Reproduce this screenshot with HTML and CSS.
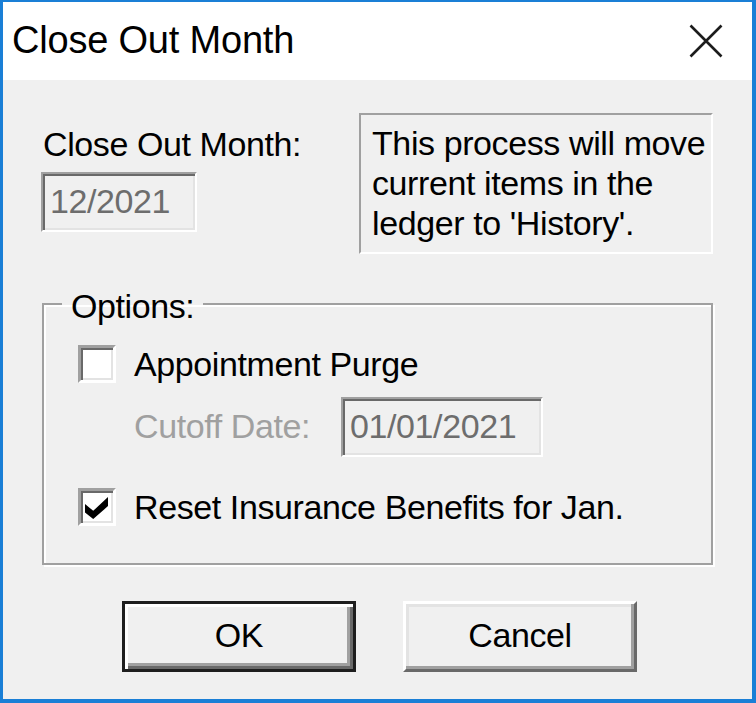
FILE: index.html
```html
<!DOCTYPE html>
<html>
<head>
<meta charset="utf-8">
<title>Close Out Month</title>
<link rel="stylesheet" href="styles.css">
</head>
<body>
<div class="window">
  <div class="titlebar">
    <span class="title">Close Out Month</span>
    <svg class="close" width="34" height="34" viewBox="0 0 34 34">
      <path d="M1.5 1.5 L32.5 32.5 M32.5 1.5 L1.5 32.5" stroke="#1c1c1c" stroke-width="2.6" fill="none"/>
    </svg>
  </div>
  <div class="content">
    <div class="top-row">
      <div class="month-col">
        <div class="label">Close Out Month:</div>
        <div class="edit edit-month">12/2021</div>
      </div>
      <div class="info">This process will move<br>current items in the<br>ledger to 'History'.</div>
    </div>
    <fieldset class="options">
      <legend class="legend">Options:</legend>
      <div class="options-body">
        <div class="check-row">
          <span class="checkbox"></span>
          <span class="label">Appointment Purge</span>
        </div>
        <div class="cutoff-row">
          <span class="label disabled">Cutoff Date:</span>
          <div class="edit edit-date">01/01/2021</div>
        </div>
        <div class="check-row check-row-last">
          <span class="checkbox">
            <svg class="tick" width="23" height="22" viewBox="0 0 7 7" preserveAspectRatio="none">
              <polygon points="0,2.2 2.5,4.4 7,0 7,2.9 2.5,7 0,4.9" fill="#000"/>
            </svg>
          </span>
          <span class="label">Reset Insurance Benefits for Jan.</span>
        </div>
      </div>
    </fieldset>
    <div class="buttons">
      <button class="btn btn-default">OK</button>
      <button class="btn">Cancel</button>
    </div>
  </div>
</div>
</body>
</html>
```
FILE: styles.css
```css
html, body {
  margin: 0;
  padding: 0;
}
body {
  width: 756px;
  height: 703px;
  overflow: hidden;
  font-family: "Liberation Sans", Arial, sans-serif;
}
.window {
  box-sizing: border-box;
  width: 756px;
  height: 703px;
  border-style: solid;
  border-color: #1a7fd6;
  border-width: 2px 4px 4px 3px;
  display: flex;
  flex-direction: column;
  background: #f0f0f0;
}
.titlebar {
  box-sizing: border-box;
  height: 78px;
  background: #ffffff;
  display: flex;
  justify-content: space-between;
  align-items: flex-start;
  padding: 16px 29px 0 9px;
}
.title {
  font-size: 38px;
  line-height: 44px;
  letter-spacing: -0.2px;
  color: #000;
}
.close {
  display: block;
  margin-top: 6px;
}
.content {
  flex: 1;
  padding: 33px 39px 0 37px;
  font-size: 34px;
  letter-spacing: -0.4px;
  color: #000;
}
.label {
  line-height: 40px;
  white-space: nowrap;
}
.top-row {
  display: flex;
  justify-content: space-between;
  align-items: flex-start;
}
.month-col {
  margin-top: 11px;
  margin-left: 3px;
  display: flex;
  flex-direction: column;
  gap: 8px;
}
.edit {
  box-sizing: border-box;
  height: 60px;
  line-height: 40px;
  padding: 7px 0 0 7px;
  color: #6d6d6d;
  background: #f0f0f0;
  border-style: solid;
  border-width: 2px;
  border-color: #a0a0a0 #ffffff #ffffff #a0a0a0;
  box-shadow: inset 2px 2px 0 #696969, inset -2px -2px 0 #e3e3e3;
  white-space: nowrap;
}
.edit-month {
  width: 156px;
  margin-left: -2px;
}
.edit-date {
  width: 202px;
  margin-left: 31px;
}
.info {
  box-sizing: border-box;
  width: 354px;
  padding: 8px 11px 9px;
  line-height: 40px;
  border-style: solid;
  border-width: 2px;
  border-color: #a0a0a0 #ffffff #ffffff #a0a0a0;
  white-space: nowrap;
}
.options {
  margin: 28px 0 0 2px;
  padding: 0;
  min-width: 0;
  border: 2px solid #a0a0a0;
  box-shadow: inset 2px 2px 0 #ffffff, 2px 2px 0 #ffffff;
}
.legend {
  margin-left: 18px;
  padding: 4px 9px 0;
  line-height: 40px;
}
.options-body {
  padding: 18px 0 36px 34px;
}
.check-row {
  display: flex;
  align-items: center;
  gap: 18px;
  height: 40px;
}
.check-row-last {
  margin-top: 30px;
}
.checkbox {
  box-sizing: border-box;
  width: 38px;
  height: 38px;
  flex: none;
  background: #ffffff;
  border-style: solid;
  border-width: 3px;
  border-color: #a0a0a0 #ffffff #ffffff #a0a0a0;
  box-shadow: inset 2px 2px 0 #696969, inset -2px -2px 0 #e3e3e3;
  display: flex;
  align-items: center;
  justify-content: center;
}
.checkbox .tick {
  display: block;
  margin: 1px 1px 0 0;
}
.cutoff-row {
  display: flex;
  align-items: baseline;
  margin-top: 13px;
  margin-left: 56px;
}
.disabled {
  color: #a0a0a0;
}
.buttons {
  display: flex;
  gap: 47px;
  margin-top: 36px;
  padding-left: 82px;
}
.btn {
  box-sizing: border-box;
  width: 234px;
  height: 71px;
  font: inherit;
  font-size: 34px;
  letter-spacing: -0.4px;
  line-height: 40px;
  color: #000;
  background: #f0f0f0;
  padding: 0 0 4px;
  margin: 0;
  border-style: solid;
  border-width: 3px;
  border-color: #ffffff #696969 #696969 #ffffff;
  box-shadow: inset -3px -3px 0 #a0a0a0, inset 3px 3px 0 #e3e3e3;
  display: flex;
  align-items: center;
  justify-content: center;
}
.btn-default {
  border-color: #1e1e1e;
  box-shadow: inset 3px 3px 0 #ffffff, inset -3px -3px 0 #696969, inset -6px -6px 0 #a0a0a0;
}
```
